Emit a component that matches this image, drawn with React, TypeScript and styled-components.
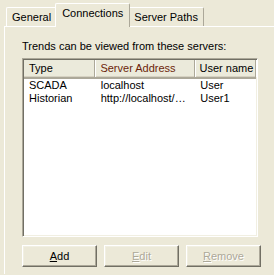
import styled, { createGlobalStyle } from 'styled-components';

const GlobalStyle = createGlobalStyle`
  html, body {
    margin: 0;
    padding: 0;
    background: #ece9d8;
  }
  body {
    font-family: "Liberation Sans", Arial, sans-serif;
    font-size: 11px;
    color: #000;
  }
`;

const Dialog = styled.div`
  width: 274px;
  height: 275px;
  padding: 3px 0 0 4px;
  box-sizing: border-box;
  overflow: hidden;
`;

const TabStrip = styled.div`
  display: flex;
  align-items: flex-end;
  height: 23px;
  padding-left: 2px;
  position: relative;
  z-index: 1;
`;

const Tab = styled.div<{ $active?: boolean }>`
  box-sizing: border-box;
  height: ${(p) => (p.$active ? '24px' : '19px')};
  margin-bottom: ${(p) => (p.$active ? '-1px' : '0')};
  padding: ${(p) => (p.$active ? '3px 6px 0' : '3px 5px 0')};
  margin-left: ${(p) => (p.$active ? '-2px' : '0')};
  margin-right: ${(p) => (p.$active ? '-2px' : '0')};
  background: #ece9d8;
  border-top: 1px solid #fff;
  border-left: 1px solid #fff;
  border-right: 1px solid #aca899;
  border-radius: 2px 2px 0 0;
  white-space: nowrap;
  z-index: ${(p) => (p.$active ? 2 : 1)};
  position: relative;
`;

const Panel = styled.div`
  box-sizing: border-box;
  width: 290px;
  height: 248px;
  border-top: 1px solid #fff;
  border-left: 1px solid #fff;
  padding: 13px 0 0 17px;
`;

const Caption = styled.div`
  height: 18px;
`;

const ListBox = styled.div`
  box-sizing: border-box;
  width: 236px;
  height: 179px;
  background: #fff;
  border-top: 1px solid #aca899;
  border-left: 1px solid #aca899;
  border-right: 1px solid #fff;
  border-bottom: 1px solid #fff;
  box-shadow: inset 1px 1px 0 #716f64, inset -1px -1px 0 #f1efe2;
`;

const HeaderRow = styled.div`
  display: flex;
  height: 17px;
  margin: 1px 1px 0;
  background: #ebeadb;
  border-bottom: 2px solid #aca899;
  box-shadow: 0 -1px 0 #d6d2c2 inset;
`;

const HeaderCell = styled.div<{ $w: number; $color?: string }>`
  box-sizing: border-box;
  width: ${(p) => p.$w}px;
  padding: 2px 0 0 5px;
  color: ${(p) => p.$color || '#000'};
  border-right: 1px solid #aca899;
  box-shadow: 1px 0 0 #fff;
  white-space: nowrap;
  overflow: hidden;
`;

const Row = styled.div`
  display: flex;
  height: 13px;
  line-height: 13px;
  margin-left: 1px;
  &:first-of-type {
    margin-top: 3px;
  }
`;

const Cell = styled.div<{ $w: number }>`
  width: ${(p) => p.$w}px;
  padding-left: 5px;
  box-sizing: border-box;
  white-space: nowrap;
  overflow: hidden;
`;

const ButtonRow = styled.div`
  display: flex;
  gap: 7px;
  margin-top: 8px;
`;

const Button = styled.button`
  box-sizing: border-box;
  width: 75px;
  height: 22px;
  padding: 0;
  font: inherit;
  background: #ece9d8;
  color: #000;
  border-top: 1px solid #fff;
  border-left: 1px solid #fff;
  border-right: 1px solid #716f64;
  border-bottom: 1px solid #716f64;
  box-shadow: inset -1px -1px 0 #aca899, inset 1px 1px 0 #f1efe2;
  &:disabled {
    color: #aca899;
    text-shadow: 1px 1px 0 #fff;
  }
  u {
    text-decoration: underline;
  }
`;

const cols = [72, 100, 62];

export default function App() {
  return (
    <>
      <GlobalStyle />
      <Dialog>
        <TabStrip>
          <Tab>General</Tab>
          <Tab $active>Connections</Tab>
          <Tab>Server Paths</Tab>
        </TabStrip>
        <Panel>
          <Caption>Trends can be viewed from these servers:</Caption>
          <ListBox>
            <HeaderRow>
              <HeaderCell $w={cols[0]}>Type</HeaderCell>
              <HeaderCell $w={cols[1]} $color="#6b1f0a">
                Server Address
              </HeaderCell>
              <HeaderCell $w={cols[2]}>User name</HeaderCell>
            </HeaderRow>
            <Row>
              <Cell $w={cols[0]}>SCADA</Cell>
              <Cell $w={cols[1]}>localhost</Cell>
              <Cell $w={cols[2]}>User</Cell>
            </Row>
            <Row>
              <Cell $w={cols[0]}>Historian</Cell>
              <Cell $w={cols[1]}>http://localhost/…</Cell>
              <Cell $w={cols[2]}>User1</Cell>
            </Row>
          </ListBox>
          <ButtonRow>
            <Button>
              <u>A</u>dd
            </Button>
            <Button disabled>
              <u>E</u>dit
            </Button>
            <Button disabled>
              <u>R</u>emove
            </Button>
          </ButtonRow>
        </Panel>
      </Dialog>
    </>
  );
}
